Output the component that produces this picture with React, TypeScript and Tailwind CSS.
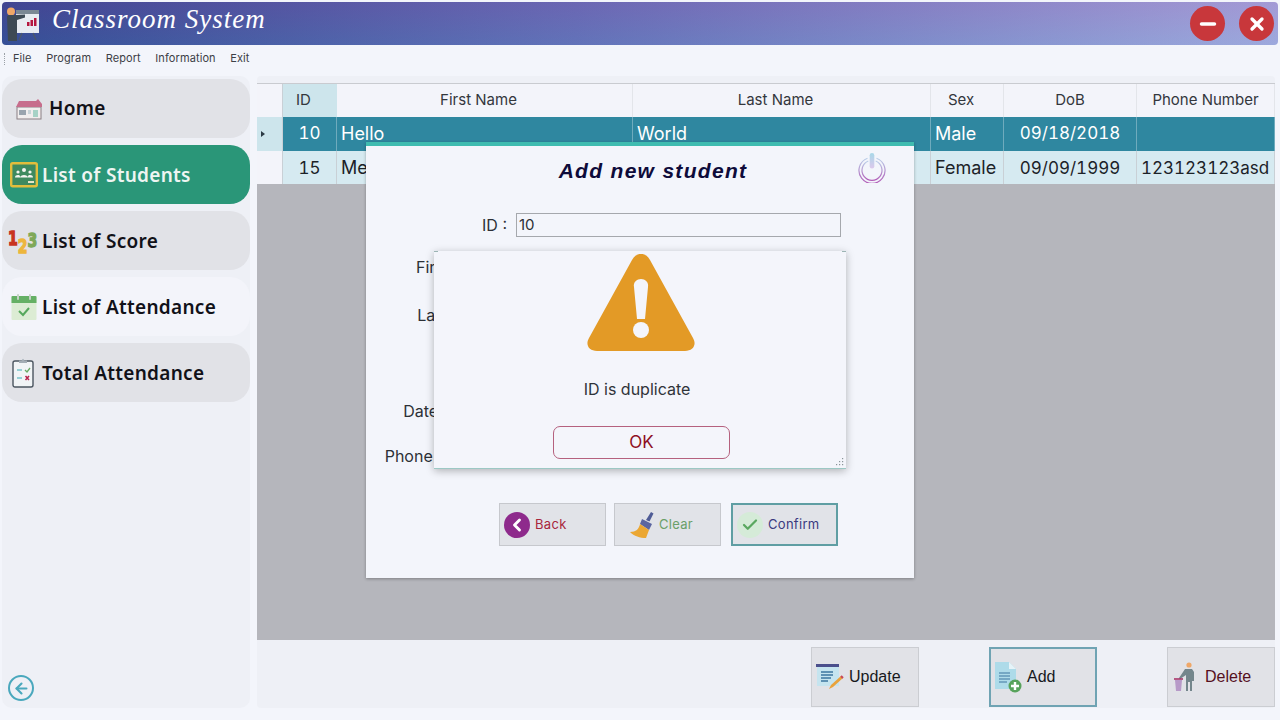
import React from 'react';
import { Minus, X, ChevronLeft, ArrowLeft, Check } from 'lucide-react';

const cols = ['w-[54px]', 'w-[296px]', 'w-[298px]', 'w-[73px]', 'w-[133px]', 'w-[138px]'];
const numericCols = [0, 4, 5];

function PresenterLogo() {
  return (
    <svg width="42" height="38" viewBox="0 0 42 38">
      <rect x="11" y="5" width="23" height="23" fill="#e8ecf2" />
      <rect x="11" y="5" width="23" height="4" fill="#7b8894" />
      <rect x="22" y="17" width="2.5" height="4" fill="#b5173f" />
      <rect x="25.5" y="15" width="2.5" height="6" fill="#b5173f" />
      <rect x="29" y="13" width="2.5" height="8" fill="#b5173f" />
      <path d="M17 28l-3 7M28 28l3 7" stroke="#4d5966" strokeWidth="1.2" />
      <circle cx="6" cy="6.5" r="4" fill="#efa768" />
      <path d="M2 12c0-1 1-2 2-2h6l10-0.5v3L12 15v21H3z" fill="#3e4a55" />
    </svg>
  );
}

function HomeIcon() {
  return (
    <svg width="28" height="22" viewBox="0 0 28 22">
      <rect x="2" y="9" width="24" height="12" fill="#f1eeee" stroke="#8a7f84" />
      <path d="M1 9l3-6h17l2-2 4 5v3z" fill="#c76d8c" />
      <rect x="4" y="12" width="7" height="5" fill="#9aa4ae" />
      <rect x="18" y="12" width="5" height="7" fill="#a7d2c6" />
      <rect x="13" y="12" width="3" height="4" fill="#c9d4d8" />
    </svg>
  );
}

function BoardIcon() {
  return (
    <svg className="-ml-[2px]" width="28" height="26" viewBox="0 0 28 26">
      <rect x="1.2" y="1.2" width="25.6" height="23" rx="1.5" fill="#3e8a5f" stroke="#e2bd3c" strokeWidth="2.4" />
      <circle cx="14" cy="8" r="2" fill="#f4f4f0" />
      <circle cx="8" cy="10" r="1.6" fill="#f4f4f0" />
      <circle cx="20" cy="10" r="1.6" fill="#f4f4f0" />
      <path d="M10 15.5c0-3.5 8-3.5 8 0zM5 15.5c0-3 5-3 5-1v1zM18 15.5v-1c0-2 5-2 5 1z" fill="#f4f4f0" />
      <rect x="18" y="19" width="6" height="2" fill="#e8e4c8" />
    </svg>
  );
}

function ScoreIcon() {
  return (
    <svg className="-ml-[3px]" width="30" height="34" viewBox="0 0 30 34">
      <text transform="scale(1 1.35)" x="0" y="15.5" fontFamily="DejaVu Sans" fontWeight="700" fontSize="14" strokeWidth="1">
        <tspan fill="#c8341f" stroke="#c8341f">1</tspan>
        <tspan dy="6" fill="#edb63c" stroke="#edb63c">2</tspan>
        <tspan dy="-4.4" fill="#7fa858" stroke="#7fa858">3</tspan>
      </text>
    </svg>
  );
}

function CalendarIcon() {
  return (
    <svg className="-ml-[2px]" width="26" height="26" viewBox="0 0 26 26">
      <rect x="0.5" y="2" width="25" height="24" rx="1" fill="#dcecd4" />
      <path d="M0.5 3a1 1 0 011-1h23a1 1 0 011 1v6h-25z" fill="#65b065" />
      <rect x="6" y="0" width="2" height="6" rx="1" fill="#c5d2c5" />
      <rect x="18" y="0" width="2" height="6" rx="1" fill="#c5d2c5" />
      <path d="M8 17l4 4 6-7" fill="none" stroke="#55a85c" strokeWidth="2" />
    </svg>
  );
}

function ClipboardIcon() {
  return (
    <svg className="-ml-[3px]" width="22" height="30" viewBox="0 0 22 30">
      <rect x="1" y="3" width="20" height="26" rx="2" fill="#f1f4f6" stroke="#4b5560" strokeWidth="1.4" />
      <path d="M7 4V2.5h2.5L11 0.8l1.5 1.7H15V5H7z" fill="#a3adb5" />
      <path d="M5 12h5M5 20h5" stroke="#78c3cb" strokeWidth="1.6" />
      <path d="M13 12l2 2 3-4" fill="none" stroke="#69a964" strokeWidth="1.3" />
      <path d="M13.5 18l3.5 4M17 18l-3.5 4" stroke="#b8204c" strokeWidth="1.5" />
    </svg>
  );
}

function PowerIcon() {
  return (
    <svg className="absolute top-[7px] right-[28px]" width="28" height="30" viewBox="0 0 28 30">
      <defs>
        <linearGradient id="ring" x1="0" y1="0" x2="0" y2="1">
          <stop offset="0" stopColor="#b9cfe8" />
          <stop offset="1" stopColor="#b25cb8" />
        </linearGradient>
        <linearGradient id="bar" x1="0" y1="0" x2="0" y2="1">
          <stop offset="0" stopColor="#a8d8e8" />
          <stop offset="1" stopColor="#dcc8ec" />
        </linearGradient>
      </defs>
      <path d="M9.5 5.2a13 13 0 1 0 9 0" fill="none" stroke="url(#ring)" strokeWidth="1.2" />
      <path d="M10.3 8a10 10 0 1 0 7.4 0" fill="none" stroke="url(#ring)" strokeWidth="1.2" />
      <rect x="11.7" y="0" width="4.6" height="15.5" rx="2.3" fill="url(#bar)" />
    </svg>
  );
}

function UpdateIcon() {
  return (
    <svg width="28" height="28" viewBox="0 0 28 28">
      <rect x="1" y="4" width="22" height="19" fill="#c5e4ef" />
      <rect x="0" y="1" width="23" height="3" fill="#4b4f8c" />
      <path d="M5 9h12M5 12h12M5 15h10M5 18h7" stroke="#3d76a0" strokeWidth="1.3" />
      <path d="M13 26l2-4 10-9 2 2-10 9z" fill="#e9a23c" />
      <path d="M25 13l2 2" stroke="#c8475a" strokeWidth="2" />
    </svg>
  );
}

function AddIcon() {
  return (
    <svg width="28" height="32" viewBox="0 0 28 32">
      <path d="M1 1h14l7 7v20H1z" fill="#aedbe9" />
      <path d="M15 1l7 7h-7z" fill="#e6f3f8" />
      <path d="M5 12h11M5 15h11M5 18h11M5 21h8" stroke="#3d76a0" strokeWidth="1.2" />
      <circle cx="21" cy="25" r="6.5" fill="#58a35c" />
      <path d="M21 21v8M17 25h8" stroke="#fff" strokeWidth="2.4" />
    </svg>
  );
}

function DeleteIcon() {
  return (
    <svg className="ml-[2px]" width="22" height="30" viewBox="0 0 22 30">
      <circle cx="15" cy="3" r="2.6" fill="#efa768" />
      <path d="M11 7h7l2 3v9h-2v10h-2v-9h-2v9h-2V13l-6 4-1-1z" fill="#74868c" />
      <path d="M1 18h7l-1 11H2z" fill="#b79ac8" />
      <path d="M0 17h9" stroke="#a11d58" strokeWidth="1.4" />
    </svg>
  );
}

function NavItem({ icon, label, tone, iconBox = 'w-[35px]', textPad = 'pt-[2px]' }: { icon: React.ReactNode; label: string; tone: 'grey' | 'green' | 'light'; iconBox?: string; textPad?: string }) {
  const toneClass =
    tone === 'green'
      ? 'bg-[#2a9678] text-[#eef5f2]'
      : tone === 'grey'
        ? 'bg-[#e1e2e7] text-[#111118]'
        : 'bg-[#f3f4fa] text-[#111118]';
  return (
    <div className={`flex h-[59px] items-center rounded-[20px] pl-[5px] ${toneClass}`}>
      <div className={`flex shrink-0 justify-center ${iconBox}`}>{icon}</div>
      <span className={`font-['Noto_Sans'] text-[19px] leading-none font-semibold tracking-[0.3px] ${textPad}`}>{label}</span>
    </div>
  );
}

function TableRow({ cells, selected, height }: { cells: string[]; selected?: boolean; height: string }) {
  return (
    <div className={`flex ${height}`}>
      <div className={`flex w-[26px] items-center justify-center border-r border-[#c9d0d6] ${selected ? 'bg-[#cde5ec]' : 'bg-[#f3f4fa]'}`}>
        {selected && <span className="-ml-[14px] h-0 w-0 border-y-[3px] border-l-[4px] border-y-transparent border-l-[#2b3a44]" />}
      </div>
      {cells.map((c, i) => {
        const numeric = numericCols.includes(i);
        return (
          <div
            key={i}
            className={`flex items-center border-r px-1 whitespace-nowrap ${cols[i]} ${numeric ? 'text-[17px] tabular-nums' : 'text-[18px]'} ${
              i === 0 || i === 4 ? 'justify-center' : ''
            } ${selected ? 'border-[#6fabbd] bg-[#2f87a0] text-white' : 'border-[#c9d0d6] bg-[#d6eaf1] text-[#1c2228]'} ${
              selected && !numeric ? 'pb-[2px]' : ''
            } ${!selected && numeric ? 'pt-[2px]' : ''}`}
          >
            {c}
          </div>
        );
      })}
    </div>
  );
}

function FormButton({ icon, label, color, active }: { icon: React.ReactNode; label: string; color: string; active?: boolean }) {
  return (
    <div className={`flex h-[43px] w-[107px] items-center bg-[#e1e3e8] pl-[4px] ${active ? 'border-2 border-[#5f9ea3]' : 'border border-[#c6c8cd]'}`}>
      {icon}
      <span className={`text-[13px] tracking-[0.3px] ${color}`}>{label}</span>
    </div>
  );
}

function ActionButton({ icon, label, color, active }: { icon: React.ReactNode; label: string; color: string; active?: boolean }) {
  return (
    <div className={`flex h-[60px] w-[108px] items-center bg-[#e1e2e7] ${active ? 'border-2 border-[#6fa3b3] pl-[3px]' : 'border border-[#cbcdd2] pl-[4px]'}`}>
      <div className="flex w-[33px] justify-start">{icon}</div>
      <span className={`font-['Liberation_Sans'] text-[16px] ${color}`}>{label}</span>
    </div>
  );
}

function FormRow({ label, value, mt }: { label: string; value?: string; mt: string }) {
  return (
    <div className={`flex h-[24px] items-center ${mt}`}>
      <div className="w-[150px] pr-[9px] text-right text-[16px] whitespace-nowrap text-[#2c3036]">{label}</div>
      <div className="h-[24px] w-[325px] border border-[#a5a8ad] pl-[2px] text-[15px] leading-[22px] text-[#2c3036]">{value}</div>
    </div>
  );
}

function AddStudentModal() {
  return (
    <div className="absolute top-[142px] left-[366px] z-10 flex h-[436px] w-[548px] flex-col border-t-[4px] border-[#3fbcb0] bg-[#f3f5fb] shadow-[0_1px_3px_rgba(0,0,0,0.3)]">
      <div className="relative flex h-[50px] items-center justify-center pl-[26px]">
        <h2 className="font-['Liberation_Sans'] text-[21px] font-bold tracking-[1.3px] text-[#0e0b3a] italic">Add new student</h2>
        <PowerIcon />
      </div>
      <div className="mt-[17px] flex flex-col">
        <FormRow label="ID :" value="10" mt="" />
        <FormRow label="First Name :" mt="mt-[18px]" />
        <FormRow label="Last Name :" mt="mt-[24px]" />
        <FormRow label="Sex :" mt="mt-[24px]" />
        <FormRow label="Date of Birth :" mt="mt-[24px]" />
        <FormRow label="Phone Number :" mt="mt-[21px]" />
      </div>
      <div className="mt-[35px] flex pl-[133px]">
        <FormButton
          label="Back"
          color="text-[#a8263c]"
          icon={
            <span className="mr-[5px] flex h-[26px] w-[26px] items-center justify-center rounded-full bg-[#8e2a8c]">
              <ChevronLeft size={20} strokeWidth={3.5} className="text-white" />
            </span>
          }
        />
        <div className="w-[8px]" />
        <FormButton
          label="Clear"
          color="text-[#6a9f68]"
          icon={
            <svg className="mr-[4px] ml-[10px]" width="26" height="26" viewBox="0 0 26 26">
              <path d="M17 8l5-8 2.5 1.5-4 8z" fill="#4f5c96" />
              <path d="M13 7l10 5-3 6-9-6z" fill="#5b65a0" />
              <path d="M11 12l9 6-3 8c-6 0-12-2-16-6 6 0 9-3 10-8z" fill="#eba733" />
            </svg>
          }
        />
        <div className="w-[10px]" />
        <FormButton
          active
          label="Confirm"
          color="text-[#3a3a80]"
          icon={
            <span className="mr-[5px] flex h-[26px] w-[26px] items-center justify-center rounded-full bg-[#d5ebd8]">
              <Check size={18} strokeWidth={3} className="text-[#5aa860]" />
            </span>
          }
        />
      </div>
    </div>
  );
}

function DuplicateAlert() {
  return (
    <div className="absolute top-[251px] left-[434px] z-20 flex h-[218px] w-[412px] flex-col items-center border-b border-[#9cc8c4] bg-[#f4f5fb] shadow-[0_2px_8px_rgba(0,0,0,0.28)]">
      <span className="absolute top-0 left-0 h-px w-[4px] bg-[#9cb4b4]" />
      <span className="absolute top-0 right-0 h-px w-[4px] bg-[#9cb4b4]" />
      <svg className="mt-[3px] ml-[1px]" width="108" height="97" viewBox="0 0 108 97">
        <path d="M54 0c4 0 7 2 9 6l43 78c4 7 0 13-8 13H10c-8 0-12-6-8-13L45 6c2-4 5-6 9-6z" fill="#e39a26" />
        <path d="M47 33c-1-5 3-8 7-8s8 3 7 8l-3 32h-8z" fill="#f4f5fb" />
        <circle cx="54" cy="76" r="8" fill="#f4f5fb" />
      </svg>
      <p className="mt-[28px] -ml-[6px] text-[16px] leading-[20px] text-[#2f3339]">ID is duplicate</p>
      <div className="mt-[27px] ml-[3px] flex h-[33px] w-[177px] items-center justify-center rounded-[7px] border border-[#b5617e] text-[17px] text-[#8e0f24]">
        OK
      </div>
      <svg className="absolute right-[2px] bottom-[2px]" width="8" height="8" viewBox="0 0 8 8" fill="#8a9499">
        <rect x="6" y="0" width="1.2" height="1.2" />
        <rect x="3" y="3" width="1.2" height="1.2" />
        <rect x="6" y="3" width="1.2" height="1.2" />
        <rect x="0" y="6" width="1.2" height="1.2" />
        <rect x="3" y="6" width="1.2" height="1.2" />
        <rect x="6" y="6" width="1.2" height="1.2" />
      </svg>
    </div>
  );
}

export default function App() {
  return (
    <div className="relative flex h-[720px] w-[1280px] flex-col overflow-hidden bg-[#f3f5fb] px-[2px] pt-[2px] font-['Inter',sans-serif]">
      <header className="flex h-[43px] shrink-0 items-center justify-between rounded-[4px] bg-[linear-gradient(to_bottom,rgba(110,60,160,0.22),rgba(60,120,190,0.18)),linear-gradient(to_right,#34478e,#6a72b8_45%,#b2b4e4)] pr-[4px] pl-[3px]">
        <div className="flex items-center">
          <PresenterLogo />
          <span className="mb-[8px] ml-[5px] font-['Liberation_Serif'] text-[27px] leading-none tracking-[1px] text-white italic">Classroom System</span>
        </div>
        <div className="flex items-center gap-[14px]">
          <span className="flex h-[35px] w-[35px] items-center justify-center rounded-full bg-[#c8373b]">
            <Minus size={22} strokeWidth={4} className="text-white" />
          </span>
          <span className="flex h-[35px] w-[35px] items-center justify-center rounded-full bg-[#c8373b]">
            <X size={20} strokeWidth={4} className="text-white" />
          </span>
        </div>
      </header>

      <nav className="flex h-[27px] shrink-0 items-center gap-[14.5px] pl-[2px] text-[11px] tracking-[0.1px] text-[#3c4046]">
        <span className="-mr-[6.5px] h-[12px] w-px border-l border-dotted border-[#9aa0a6]" />
        <span>File</span>
        <span>Program</span>
        <span>Report</span>
        <span>Information</span>
        <span>Exit</span>
      </nav>

      <div className="mt-[4px] flex h-[632px] gap-[7px]">
        <aside className="relative flex w-[248px] shrink-0 flex-col gap-[7px] rounded-[10px] bg-[#eef0f6] pt-[3px]">
          <NavItem icon={<HomeIcon />} label="Home" tone="grey" iconBox="w-[42px] pl-[2px]" textPad="pb-[1px]" />
          <NavItem icon={<BoardIcon />} label="List of Students" tone="green" />
          <NavItem icon={<ScoreIcon />} label="List of Score" tone="grey" />
          <NavItem icon={<CalendarIcon />} label="List of Attendance" tone="light" />
          <NavItem icon={<ClipboardIcon />} label="Total Attendance" tone="grey" />
          <span className="absolute bottom-[7px] left-[6px] flex h-[26px] w-[26px] items-center justify-center rounded-full border-2 border-[#4aa8bd]">
            <ArrowLeft size={17} strokeWidth={3} className="text-[#4aa8bd]" />
          </span>
        </aside>

        <main className="flex w-[1018px] flex-col rounded-[4px] bg-[#eef0f6] pt-[7px]">
          <div className="flex flex-1 flex-col bg-[#b5b6bc]">
            <div className="flex h-[34px] border-t border-[#c9cbd0] bg-[#f3f4fa]">
              <div className="w-[26px] border-r border-[#c9d0d6]" />
              <div className={`flex items-center justify-center bg-[#cde5ec] pr-[13px] text-[15px] text-[#33373d] ${cols[0]}`}>ID</div>
              {['First Name', 'Last Name', 'Sex'].map((h, i) => (
                <div key={h} className={`flex items-center justify-center border-r border-[#e3e5ea] pr-[12px] text-[15px] text-[#33373d] ${cols[i + 1]}`}>
                  {h}
                </div>
              ))}
              {['DoB', 'Phone Number'].map((h, i) => (
                <div key={h} className={`flex items-center justify-center border-r border-[#e3e5ea] text-[15px] text-[#33373d] ${cols[i + 4]}`}>
                  {h}
                </div>
              ))}
            </div>
            <TableRow selected height="h-[34px]" cells={['10', 'Hello', 'World', 'Male', '09/18/2018', '']} />
            <TableRow height="h-[33px]" cells={['15', 'Me', '', 'Female', '09/09/1999', '123123123asd']} />
          </div>
          <div className="flex h-[68px] shrink-0 items-start justify-between pt-[7px] pl-[554px]">
            <ActionButton icon={<UpdateIcon />} label="Update" color="text-[#17191d]" />
            <ActionButton active icon={<AddIcon />} label="Add" color="text-[#17191d]" />
            <ActionButton icon={<DeleteIcon />} label="Delete" color="text-[#55101e]" />
          </div>
        </main>
      </div>

      <AddStudentModal />
      <DuplicateAlert />
    </div>
  );
}
